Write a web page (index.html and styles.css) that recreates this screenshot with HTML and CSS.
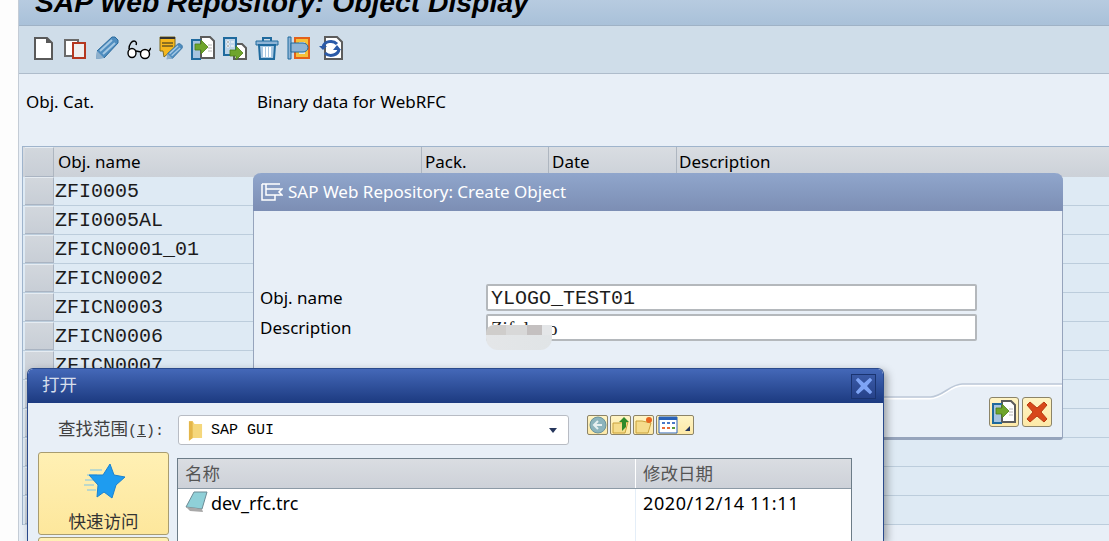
FILE: index.html
```html
<!DOCTYPE html>
<html lang="en">
<head>
    <meta charset="UTF-8">
    <title>SAP Web Repository: Object Display</title>
    <link rel="stylesheet" href="styles.css">
</head>
<body>
    <svg class="defs" width="0" height="0">
        <symbol id="ic-pencil" viewBox="0 0 24 24">
            <path d="M1 23l1-8L17 1h3l3 3v3L9 22z" fill="#4f8dbf"/>
            <path d="M1 23l1-8 7 7z" fill="#8fb0cc"/>
            <path d="M5 15L17 4M8 18L20 7" stroke="#a4c8e4" stroke-width="2" fill="none"/>
            <path d="M2 15L17 1h3l3 3v3L9 22" stroke="#2b6a9c" fill="none"/>
        </symbol>
        <symbol id="ic-arrow" viewBox="0 0 14 14">
            <path d="M1 4h6V0l7 7-7 7v-4H1z" fill="#6fa52c" stroke="#4c7f18" stroke-width=".8"/>
        </symbol>
        <symbol id="ic-transfer" viewBox="0 0 24 24">
            <path d="M10 1h9l4 4v17H10z" fill="#fff" stroke="#5c5c5c" stroke-width="2"/>
            <path d="M17 9h4M17 12h4M17 15h4" stroke="#b8b8b8"/>
            <path d="M1 4h8v18H1z" fill="#a6c4e0"/>
            <path d="M10 4H1v19h9" fill="none" stroke="#1f6a9e" stroke-width="2"/>
            <use href="#ic-arrow" x="3" y="4" width="14" height="14"/>
        </symbol>
        <symbol id="ic-cross" viewBox="0 0 24 24">
            <path d="M5 2l7 6 7-6 3 3-6 7 6 7-3 3-7-6-7 6-3-3 6-7-6-7z" fill="#d8481a" stroke="#b93c12"/>
        </symbol>
    </svg>

    <aside class="rail"></aside>

    <main class="screen">
        <header class="title-bar"><h1>SAP Web Repository: Object Display</h1></header>

        <nav class="toolbar">
            <svg class="icon" viewBox="0 0 24 24"><path d="M4 2h12l5 5v16H4z" fill="#fff" stroke="#5a5a5a" stroke-width="2"/><path d="M15 1l6 6h-6z" fill="#5a5a5a"/></svg>
            <svg class="icon" viewBox="0 0 24 24"><path d="M2 4h13v16H2z" fill="#fff" stroke="#6a6a6a" stroke-width="2"/><path d="M10 7h12v15H10z" fill="#eee" stroke="#b5371f" stroke-width="2"/></svg>
            <svg class="icon"><use href="#ic-pencil"/></svg>
            <svg class="icon" viewBox="0 0 24 24"><g fill="#fff" stroke="#000" stroke-width="1.4"><ellipse cx="5" cy="17" rx="4" ry="4.500"/><ellipse cx="18" cy="18" rx="4.500" ry="4.500"/></g><path d="M9 15l5 1M2 13C2 8 5 5 7 5s3 2 2 4M22 15l2-3" fill="none" stroke="#000" stroke-width="1.4"/></svg>
            <svg class="icon" viewBox="0 0 24 24"><path d="M1 1h15v14h-4l-7 6-1-6H1z" fill="#f5b71e" stroke="#7c6a20"/><path d="M1 1h15v2H1z" fill="#333"/><path d="M3 7h11M3 10h11" stroke="#6b5a20" stroke-width="1.5"/><use href="#ic-pencil" x="7" y="7" width="17" height="17"/></svg>
            <svg class="icon"><use href="#ic-transfer"/></svg>
            <svg class="icon" viewBox="0 0 24 24"><path d="M11 8h8l4 4v11H11z" fill="#fff" stroke="#5c5c5c" stroke-width="2"/><path d="M1 2h12v17H1z" fill="#bcd3e8" stroke="#1f6a9e" stroke-width="2"/><path d="M4 5h2v2H4zM4 9h2v2H4zM8 6h3M8 10h3" stroke="#fff"/><use href="#ic-arrow" x="6" y="10" width="14" height="14"/></svg>
            <svg class="icon" viewBox="0 0 24 24"><path d="M1 5h22v4H1z" fill="#8fb4d6" stroke="#1f6a9e"/><path d="M8 5V2h8v3" fill="none" stroke="#1f6a9e" stroke-width="2"/><path d="M4 9h16l-1 14H5z" fill="#a9c8e2" stroke="#1f6a9e" stroke-width="2"/><path d="M9 11v10M12 11v10M15 11v10" stroke="#fff" stroke-width="2"/></svg>
            <svg class="icon" viewBox="0 0 24 24"><path d="M8 2h14v20H8z" fill="#f5c13a" stroke="#e4611a" stroke-width="2"/><path d="M12 6h6v12h-6z" fill="#dfe8f0"/><path d="M1 1h3v22H1z" fill="#8fb4d6" stroke="#1f6a9e"/><path d="M4 7h12a5 4.500 0 0 1 0 9H4z" fill="#8fb4d6" stroke="#1f6a9e"/></svg>
            <svg class="icon" viewBox="0 0 24 24"><path d="M6 1h12l5 5v17H6z" fill="#fff" stroke="#5c5c5c" stroke-width="2"/><path d="M4 11a8 7 0 0 1 14-3" fill="none" stroke="#2a5aa8" stroke-width="3"/><path d="M20 13a8 7 0 0 1-14 4" fill="none" stroke="#2a5aa8" stroke-width="3"/><path d="M0 10h8l-4 4zM22 14h-8l4-5z" fill="#2a5aa8"/></svg>
        </nav>

        <section class="selection">
            <span class="selection-label">Obj. Cat.</span>
            <span>Binary data for WebRFC</span>
        </section>

        <section class="grid">
            <div class="grid-head">
                <div class="sel-cell"></div>
                <div class="col-name">Obj. name</div>
                <div class="col-pack">Pack.</div>
                <div class="col-date">Date</div>
                <div class="col-desc">Description</div>
            </div>
            <div class="grid-row"><div class="sel-cell"></div><div class="cell">ZFI0005</div></div>
            <div class="grid-row"><div class="sel-cell"></div><div class="cell">ZFI0005AL</div></div>
            <div class="grid-row"><div class="sel-cell"></div><div class="cell">ZFICN0001_01</div></div>
            <div class="grid-row"><div class="sel-cell"></div><div class="cell">ZFICN0002</div></div>
            <div class="grid-row"><div class="sel-cell"></div><div class="cell">ZFICN0003</div></div>
            <div class="grid-row"><div class="sel-cell"></div><div class="cell">ZFICN0006</div></div>
            <div class="grid-row"><div class="sel-cell"></div><div class="cell">ZFICN0007</div></div>
            <div class="grid-row"><div class="sel-cell"></div><div class="cell"></div></div>
            <div class="grid-row"><div class="sel-cell"></div><div class="cell"></div></div>
            <div class="grid-row"><div class="sel-cell"></div><div class="cell"></div></div>
            <div class="grid-row"><div class="sel-cell"></div><div class="cell"></div></div>
            <div class="grid-row"><div class="sel-cell"></div><div class="cell"></div></div>
        </section>
    </main>

    <!-- SAP popup -->
    <div class="popup">
        <div class="popup-title">
            <svg class="popup-icon" viewBox="0 0 22 18"><path d="M5 6V1h14M1 1h4M1 1v16h13v-5M5 6h16l-3 3 3 3H5z" fill="none" stroke="#fff" stroke-width="1.5"/></svg>
            <span class="popup-title-text">SAP Web Repository: Create Object</span>
        </div>
        <div class="popup-body">
            <div class="form-row">
                <label>Obj. name</label>
                <div class="field">YLOGO_TEST01</div>
            </div>
            <div class="form-row">
                <label>Description</label>
                <div class="field field-desc">Zif_logo</div>
            </div>
            <div class="smudge"></div>
        </div>
        <svg class="popup-wave" viewBox="0 0 810 20" preserveAspectRatio="none"><path d="M0 18.500H678c12 0 20-13 32-13H810" fill="none" stroke="#fff" stroke-width="2"/><path d="M0 17H678c12 0 20-13 32-13H810" fill="none" stroke="#bcc8d8" stroke-width="1.5"/></svg>
        <div class="popup-actions">
            <button class="sap-btn"><svg class="btn-icon"><use href="#ic-transfer"/></svg></button>
            <button class="sap-btn"><svg class="btn-icon"><use href="#ic-cross"/></svg></button>
        </div>
    </div>

    <!-- file open dialog -->
    <div class="file-dialog">
        <div class="file-title">
            <span class="file-title-text">打开</span>
            <button class="close-btn"><svg width="18" height="18" viewBox="0 0 24 24"><path d="M4 1l8 7 8-7 3 3-7 8 7 8-3 3-8-7-8 7-3-3 7-8-7-8z" fill="#7ea4f5"/></svg></button>
        </div>
        <div class="file-lookin">
            <span class="lookin-label">查找范围<span class="mono">(<u>I</u>):</span></span>
            <div class="combo">
                <svg class="folder" viewBox="0 0 16 22"><path d="M1 1h4l2 3h8v15H5l-4 3z" fill="#f5d77c"/><path d="M1 1h4v18l-4 3z" fill="#e4b64a"/></svg>
                <span class="combo-text">SAP GUI</span>
                <span class="combo-arrow"></span>
            </div>
            <div class="tool-group">
                <button class="tool-btn"><svg width="18" height="18" viewBox="0 0 18 18"><circle cx="9" cy="9" r="8" fill="#8cb4bc" stroke="#6c949c"/><path d="M13 9H6M9 5L5 9l4 4" fill="none" stroke="#e6f0f0" stroke-width="2"/></svg></button>
                <button class="tool-btn"><svg width="18" height="18" viewBox="0 0 18 18"><path d="M1 7h6l9-1-3 11H1z" fill="#f5dc8c" stroke="#c9a23c"/><path d="M10 15V6H7l5-5 5 5h-3v5z" fill="#2f8a2a"/></svg></button>
                <button class="tool-btn"><svg width="18" height="18" viewBox="0 0 18 18"><path d="M1 5h6l9 2-3 10H1z" fill="#f5dc8c" stroke="#c9a23c"/><circle cx="14" cy="4" r="3" fill="#e8641e"/></svg></button>
                <button class="tool-btn view-btn"><svg width="20" height="18" viewBox="0 0 20 18"><path d="M1 1h18v16H1z" fill="#fff" stroke="#2a62b8"/><path d="M1 1h18v3H1z" fill="#2a62b8"/><path d="M4 6h3v2H4zM9 6h3v2H9zM14 6h3v2h-3z" fill="#4a78c8"/><path d="M4 11h3v2H4zM9 11h3v2H9z" fill="#e86a3a"/><path d="M14 11h3v2h-3z" fill="#5a9a3a"/></svg><span class="view-arrow"></span></button>
            </div>
        </div>
        <div class="file-main">
            <div class="places">
                <button class="place-btn">
                    <svg class="place-star" viewBox="0 0 44 40"><path d="M8 7h12M5 12h10M3 17h9M2 22h10M5 27h9" stroke="#7ac4ea" stroke-width="1.2"/><path d="M28 1l4 11 11 2-9 8-4 13-8-6-7 5 1-12-9-10 14 0z" fill="#1e9cf0" stroke="#1a82d0"/></svg>
                    <span>快速访问</span>
                </button>
                <button class="place-btn"></button>
            </div>
            <div class="file-list">
                <div class="list-head">
                    <div class="lh-name">名称</div>
                    <div class="lh-date">修改日期</div>
                </div>
                <div class="list-row">
                    <div class="lr-name">
                        <svg class="file-icon" viewBox="0 0 24 22"><path d="M9 1h13l-5 17-16-2z" fill="#8fd0d8" stroke="#6c8a94"/><path d="M1 16l16 2 1 3-13-1z" fill="#a8a8a8"/></svg>
                        dev_rfc.trc
                    </div>
                    <div class="lr-date">2020/12/14 11:11</div>
                </div>
            </div>
        </div>
    </div>
</body>
</html>
```
FILE: styles.css
```css
html, body {
    height: 100%;
}

body {
    margin: 0;
    display: flex;
    overflow: hidden;
    background-color: #fdfdfd;
    color: #000;
    font-family: "Noto Sans", "Liberation Sans", sans-serif;
    font-size: 17px;
}

.defs {
    position: absolute;
}

button {
    padding: 0;
    font: inherit;
}

.mono {
    font-family: "Liberation Mono", monospace;
    font-size: 15px;
}

.rail {
    flex: 0 0 18px;
    border-right: 1px solid #c4ccd6;
}

.screen {
    flex: 1;
    min-width: 0;
    height: 100%;
    overflow: hidden;
    background-color: #e8eff7;
}

/* title + toolbar */
.title-bar {
    height: 25px;
    background: linear-gradient(#b7cbe0, #a9c1d9);
    border-bottom: 1px solid #9fb2c6;
    display: flex;
    align-items: flex-end;
    padding-left: 16px;
    overflow: hidden;
}

.title-bar h1 {
    margin: 0 0 7px;
    font-family: "Liberation Sans", sans-serif;
    font-size: 28.3px;
    line-height: 32px;
    font-style: italic;
    white-space: nowrap;
}

.toolbar {
    height: 48px;
    background-color: #cfdde9;
    border-bottom: 1px solid #aebccb;
    display: flex;
    gap: 8px;
    padding: 10px 0 0 12px;
    box-sizing: border-box;
}

.icon {
    width: 24px;
    height: 24px;
    flex: none;
}

.selection {
    height: 72px;
    display: flex;
    align-items: center;
    padding: 0 0 18px 7px;
    box-sizing: border-box;
}

.selection-label {
    width: 231px;
}

/* table behind the popups */
.grid {
    margin-left: 3px;
    border-top: 1px solid #9fb4cc;
    border-left: 1px solid #9fb4cc;
    padding-left: 2px;
}

.grid-head {
    height: 30px;
    display: flex;
    background: linear-gradient(#d9dde2, #ccd1d8);
    margin-left: -2px;
    padding-left: 2px;
}

.grid-head > div {
    line-height: 30px;
    border-right: 1px solid #aeb6c0;
    padding-left: 3px;
    box-sizing: border-box;
    flex: none;
}

.col-name { width: 368px; padding-left: 4px !important; }
.col-pack { width: 127px; }
.col-date { width: 128px; }
.col-desc { border-right: 0 !important; width: 400px; padding-left: 2px !important; }

.grid-row {
    height: 29px;
    display: flex;
    background-color: #deeaf4;
    border-bottom: 1px solid #bccddc;
    box-sizing: border-box;
    margin-left: -2px;
    padding-left: 2px;
}

.sel-cell {
    flex: none;
    width: 29px;
    box-sizing: border-box;
    background: linear-gradient(#d2d7dd, #c8ced6);
    border-top: 1px solid #e6ecf2;
    border-right: 1px solid #aab4c2;
    border-bottom: 1px solid #aab4c2;
}

.cell {
    padding-left: 1px;
    font-family: "Liberation Mono", monospace;
    font-size: 20px;
    line-height: 30px;
    color: #1c1c1c;
}

/* SAP popup */
.popup {
    position: absolute;
    left: 253px;
    top: 173px;
    width: 810px;
    height: 267px;
    box-sizing: border-box;
    background-color: #e8eff7;
    border-right: 1px solid #96a4bc;
    border-bottom: 3px solid #96a4bc;
    border-left: 1px solid #96a4bc;
    border-radius: 8px 8px 3px 3px;
}

.popup-title {
    height: 38px;
    margin: 0 -1px;
    padding-left: 8px;
    display: flex;
    align-items: center;
    gap: 5px;
    color: #fff;
    background: linear-gradient(#90a6cc, #7c8eb4);
    border-radius: 8px 8px 0 0;
}

.popup-title-text {
    margin-bottom: 2px;
}

.popup-icon {
    width: 22px;
    height: 18px;
}

.popup-body {
    position: relative;
    padding: 73px 0 0 6px;
}

.form-row {
    display: flex;
    align-items: center;
    height: 27px;
    margin-bottom: 3px;
}

.form-row label {
    width: 226px;
    flex: none;
}

.field {
    width: 491px;
    height: 27px;
    box-sizing: border-box;
    background-color: #fff;
    border: 2px solid #b4b8bc;
    border-radius: 2px;
    padding-left: 3px;
    font-family: "Liberation Mono", monospace;
    font-size: 20px;
    line-height: 26px;
    color: #1c1c1c;
}

.field-desc {
    font-family: "Liberation Serif", serif;
    font-size: 19px;
}

/* blurred-out patch over the description */
.smudge {
    position: absolute;
    left: 232px;
    top: 114px;
    width: 66px;
    height: 25px;
    border-radius: 8px 0 12px 12px;
    background:
        linear-gradient(90deg, #cfcdcb 0 30%, #d8d8d8 30% 62%, #c4c0c0 62% 85%, #e4e6e8 85%) top / 100% 40% no-repeat,
        linear-gradient(90deg, #e4e6e8, #e0e4e6);
}

.popup-wave {
    position: absolute;
    left: 0;
    top: 207px;
    width: 100%;
    height: 20px;
}

.popup-actions {
    position: absolute;
    right: 10px;
    top: 224px;
    display: flex;
    gap: 3px;
}

.sap-btn {
    width: 30px;
    height: 30px;
    background: linear-gradient(#fff4c4, #fde9a8);
    border: 1px solid #8c8468;
    border-radius: 3px;
    display: flex;
    align-items: center;
    justify-content: center;
}

.btn-icon {
    width: 24px;
    height: 24px;
}

/* file open dialog, runs off the bottom of the window */
.file-dialog {
    position: absolute;
    left: 27px;
    top: 368px;
    width: 857px;
    height: 173px;
    overflow: hidden;
    box-sizing: border-box;
    background-color: #e8eff7;
    border: 1px solid #2a4a8c;
    border-bottom: 0;
    border-radius: 6px 6px 0 0;
    box-shadow: 3px 3px 8px rgba(0, 0, 0, 0.35);
    font-family: "Noto Sans CJK SC", sans-serif;
    font-size: 17.5px;
}

.file-title {
    height: 34px;
    padding: 0 7px 0 14px;
    display: flex;
    align-items: center;
    justify-content: space-between;
    color: #d8dfec;
    background: linear-gradient(#4468b8, #1c3a80);
    border-radius: 5px 5px 0 0;
}

.file-title-text {
    margin-bottom: 6px;
}

.close-btn {
    width: 25px;
    height: 25px;
    background: linear-gradient(#3a5aa6, #26428a);
    border: 1px solid #1a3470;
    display: flex;
    align-items: center;
    justify-content: center;
}

.file-lookin {
    display: flex;
    align-items: center;
    height: 30px;
    margin-top: 12px;
}

.lookin-label {
    width: 150px;
    flex: none;
    box-sizing: border-box;
    padding: 0 14px 5px 0;
    text-align: right;
    color: #404040;
    white-space: nowrap;
}

.combo {
    width: 391px;
    height: 30px;
    flex: none;
    box-sizing: border-box;
    background-color: #fff;
    border: 1px solid #b8bcc4;
    border-radius: 3px;
    display: flex;
    align-items: center;
    padding: 0 11px 0 9px;
}

.folder {
    width: 15px;
    height: 21px;
}

.combo-text {
    flex: 1;
    margin: 1px 0 0 8px;
    font-family: "Liberation Mono", monospace;
    font-size: 15px;
}

.combo-arrow {
    border-top: 5px solid #26365c;
    border-left: 4px solid transparent;
    border-right: 4px solid transparent;
}

.tool-group {
    display: flex;
    gap: 2px;
    margin: -10px 0 0 18px;
}

.tool-btn {
    width: 21px;
    height: 20px;
    background: linear-gradient(#fff4c4, #fde9a8);
    border: 1px solid #8c8468;
    border-radius: 2px;
    display: flex;
    align-items: center;
    justify-content: center;
}

.view-btn {
    position: relative;
    width: 38px;
    justify-content: flex-start;
    padding-left: 1px;
}

.view-arrow {
    position: absolute;
    right: 3px;
    bottom: 3px;
    border-bottom: 5px solid #26365c;
    border-left: 5px solid transparent;
}

.file-main {
    display: flex;
    margin-top: 7px;
    padding-left: 10px;
}

.places {
    width: 131px;
    flex: none;
    margin-right: 8px;
    display: flex;
    flex-direction: column;
    gap: 2px;
}

.place-btn {
    height: 83px;
    flex: none;
    background: linear-gradient(#fff0b4, #fde79c);
    border: 1px solid #a89c70;
    border-radius: 3px;
    display: flex;
    flex-direction: column;
    align-items: center;
    color: #333;
    line-height: 24px;
}

.place-star {
    width: 44px;
    height: 40px;
    margin: 10px 0 6px;
}

.file-list {
    width: 675px;
    flex: none;
    border: 1px solid #6c7c88;
    border-bottom: 0;
    background-color: #fff;
    margin-top: 6px;
    box-sizing: border-box;
}

.list-head {
    height: 30px;
    display: flex;
    background: linear-gradient(#dadde2, #cdd1d8);
    border-bottom: 1px solid #8c9aa6;
    box-sizing: border-box;
    color: #555;
    line-height: 27px;
}

.lh-name {
    width: 458px;
    padding-left: 7px;
    box-sizing: border-box;
    border-right: 1px solid #fff;
}

.lh-date {
    padding-left: 7px;
}

.list-row {
    display: flex;
    font-family: "Noto Sans", sans-serif;
    font-size: 18px;
    line-height: 28px;
}

.lr-name {
    width: 458px;
    height: 70px;
    box-sizing: border-box;
    padding-left: 7px;
    display: flex;
    align-items: flex-start;
    gap: 2px;
    border-right: 1px solid #e4eef8;
}

.file-icon {
    width: 24px;
    height: 22px;
    margin-top: 2px;
}

.lr-date {
    padding-left: 7px;
    letter-spacing: 0.6px;
}
```
